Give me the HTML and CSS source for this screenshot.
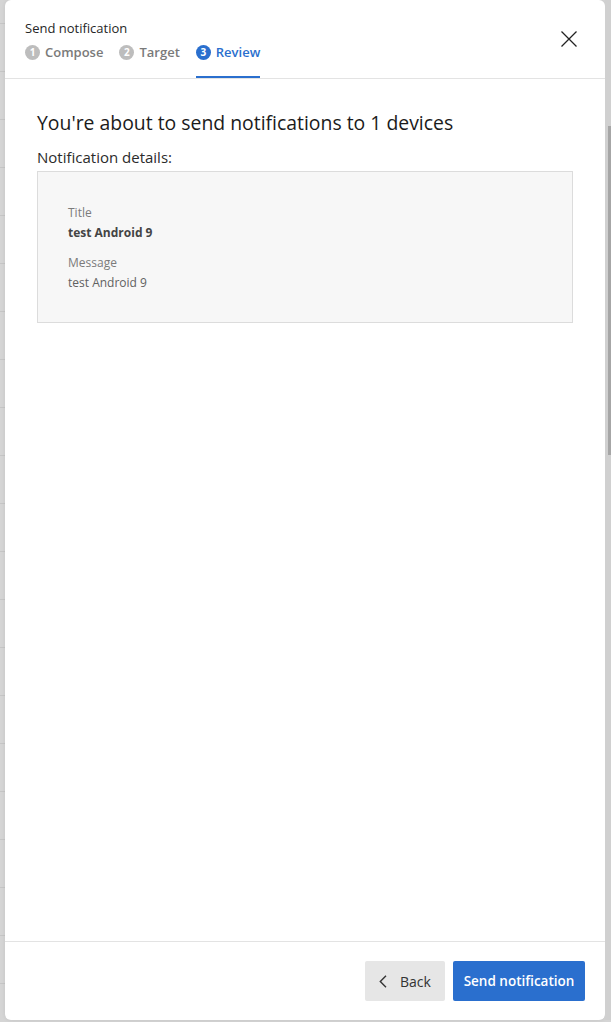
FILE: index.html
```html
<!DOCTYPE html>
<html>
<head>
  <meta charset="utf-8">
  <link rel="stylesheet" href="styles.css">
</head>
<body>
  <div class="page">
    <div class="backdrop-left"></div>

    <div class="dialog">
      <div class="dialog-header">
        <div class="header-main">
          <div class="dialog-title">Send notification</div>
          <div class="steps">
            <div class="step"><span class="step-num">1</span> Compose</div>
            <div class="step"><span class="step-num">2</span> Target</div>
            <div class="step active"><span class="step-num">3</span> Review</div>
          </div>
        </div>
        <button class="close-btn" title="Close">
          <svg width="16" height="16" viewBox="0 0 16 16">
            <path d="M0.5 0.5 L15.5 15.5 M15.5 0.5 L0.5 15.5" stroke="#222" stroke-width="1.3" fill="none"/>
          </svg>
        </button>
      </div>

      <div class="dialog-body">
        <div class="review-heading">You're about to send notifications to 1 devices</div>
        <div class="details-label">Notification details:</div>
        <div class="details-box">
          <div class="field-label">Title</div>
          <div class="field-value bold">test Android 9</div>
          <div class="field-label spaced">Message</div>
          <div class="field-value">test Android 9</div>
        </div>
      </div>

      <div class="dialog-footer">
        <button class="btn btn-back">
          <svg width="8" height="13" viewBox="0 0 8 13">
            <path d="M7 0.8 L1.3 6.5 L7 12.2" stroke="#333" stroke-width="1.4" fill="none"/>
          </svg>
          Back
        </button>
        <button class="btn btn-primary">Send notification</button>
      </div>
    </div>

    <div class="scrollbar">
      <div class="scroll-thumb"></div>
    </div>
  </div>
</body>
</html>
```

FILE: styles.css
```css
* {
  margin: 0;
  padding: 0;
  box-sizing: border-box;
}

body {
  width: 611px;
  height: 1022px;
  overflow: hidden;
  font-family: "Segoe UI", "Open Sans", "Noto Sans", sans-serif;
  color: #222;
  background-color: #d5d5d5;
  background-image: repeating-linear-gradient(180deg, transparent 0, transparent 23px, #c6c6c6 23px, #c6c6c6 24px, transparent 24px, transparent 48px);
}

.page {
  display: flex;
  height: 1020px;
}

.backdrop-left {
  width: 5px;
  flex-shrink: 0;
}

.dialog {
  width: 600px;
  height: 1020px;
  background: #fff;
  border-radius: 6px;
  display: flex;
  flex-direction: column;
  box-shadow: 0 0 4px rgba(0,0,0,0.08);
}

.dialog-header {
  display: flex;
  align-items: center;
  justify-content: space-between;
  padding: 0 20px;
  border-bottom: 1px solid #e3e3e3;
}

.header-main {
  padding-top: 18px;
}

.dialog-title {
  font-size: 13px;
  line-height: 20px;
  color: #262626;
}

.steps {
  display: flex;
  gap: 16px;
  margin-top: 4px;
}

.step {
  display: flex;
  align-items: center;
  gap: 5px;
  font-size: 13px;
  font-weight: 600;
  line-height: 20px;
  color: #7a7a7a;
  padding-bottom: 14px;
  border-bottom: 2px solid transparent;
}

.step-num {
  width: 15px;
  height: 15px;
  border-radius: 50%;
  background: #bdbdbd;
  color: #fff;
  font-size: 10px;
  font-weight: 700;
  line-height: 15px;
  text-align: center;
}

.step.active {
  color: #2a6fce;
  border-bottom-color: #2a6fce;
}

.step.active .step-num {
  background: #2a6fce;
}

.close-btn {
  width: 32px;
  height: 32px;
  border: none;
  background: none;
  display: flex;
  align-items: center;
  justify-content: center;
  cursor: pointer;
}

.dialog-body {
  flex: 1;
  padding: 30px 32px 0;
}

.review-heading {
  font-size: 19.4px;
  font-weight: 500;
  line-height: 28px;
  color: #1b1b1b;
  margin-bottom: 10px;
}

.details-label {
  font-size: 15px;
  line-height: 20px;
  color: #2b2b2b;
  margin-bottom: 4px;
}

.details-box {
  background: #f7f7f7;
  border: 1px solid #dcdcdc;
  padding: 31px 30px 29px 30px;
}

.field-label {
  font-size: 12px;
  line-height: 20px;
  color: #7b7b7b;
}

.field-label.spaced {
  margin-top: 10px;
}

.field-value {
  font-size: 12px;
  line-height: 20px;
  color: #616161;
}

.field-value.bold {
  font-weight: 700;
  color: #444;
}

.dialog-footer {
  display: flex;
  justify-content: flex-end;
  gap: 8px;
  padding: 19px 20px;
  border-top: 1px solid #e3e3e3;
}

.btn {
  height: 40px;
  border: none;
  border-radius: 2px;
  font-family: inherit;
  font-size: 14px;
  cursor: pointer;
  display: flex;
  align-items: center;
}

.btn-back {
  width: 80px;
  background: #e6e6e6;
  color: #333;
  padding: 0 14px 0 14px;
  gap: 13px;
}

.btn-primary {
  width: 132px;
  justify-content: center;
  background: #2a6fce;
  color: #fff;
  font-size: 13.5px;
  font-weight: 600;
}

.scrollbar {
  width: 6px;
  height: 1020px;
  background: #d0d0d0;
  padding-top: 126px;
  padding-left: 3px;
}

.scroll-thumb {
  width: 3px;
  height: 329px;
  background: #a6a6a6;
}
```
